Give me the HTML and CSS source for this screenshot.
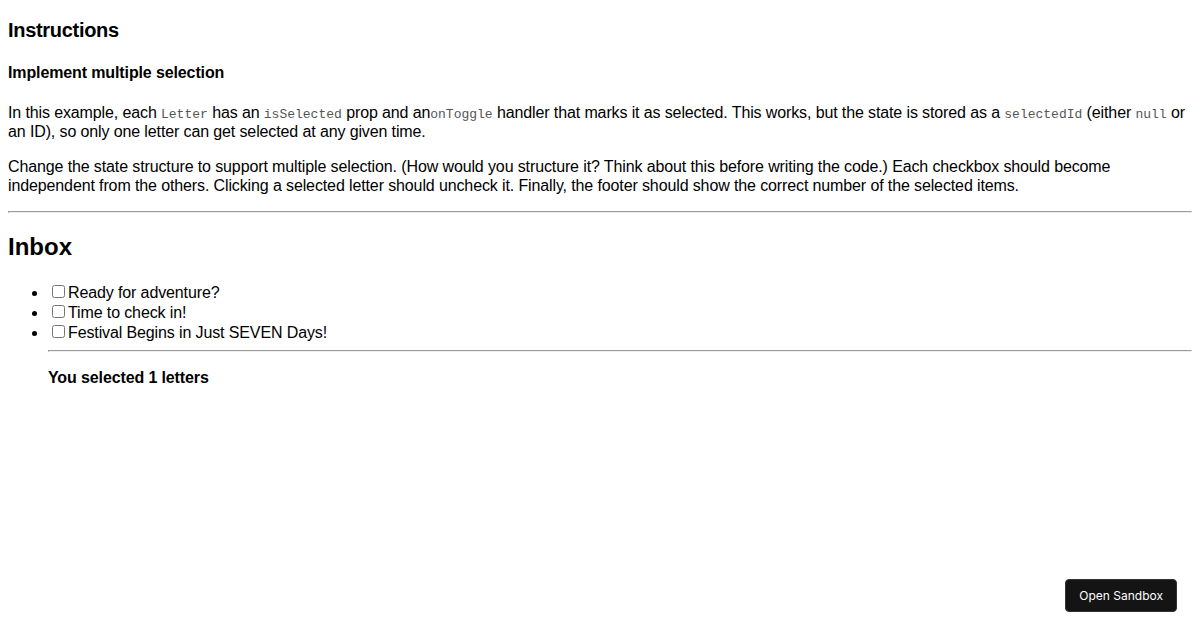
FILE: index.html
```html
<!DOCTYPE html>
<html>
<head>
<meta charset="utf-8">
<title>Inbox</title>
<link rel="stylesheet" href="styles.css">
</head>
<body>
<div class="instructions">
  <h2>Instructions</h2>
  <h3>Implement multiple selection</h3>
  <p>In this example, each <code>Letter</code> has an <code>isSelected</code> prop and an<code>onToggle</code> handler that marks it as selected. This works, but the state is stored as a <code>selectedId</code> (either <code>null</code> or an ID), so only one letter can get selected at any given time.</p>
  <p>Change the state structure to support multiple selection. (How would you structure it? Think about this before writing the code.) Each checkbox should become independent from the others. Clicking a selected letter should uncheck it. Finally, the footer should show the correct number of the selected items.</p>
</div>
<hr>
<h2 class="inbox-title">Inbox</h2>
<ul>
  <li><label><input type="checkbox">Ready for adventure?</label></li>
  <li><label><input type="checkbox">Time to check in!</label></li>
  <li><label><input type="checkbox">Festival Begins in Just SEVEN Days!</label></li>
  <hr>
  <p class="count"><b>You selected 1 letters</b></p>
</ul>
<button class="sandbox">Open Sandbox</button>
</body>
</html>
```

FILE: styles.css
```css
body {
    font-family: "Liberation Sans", Arial, sans-serif;
    letter-spacing: -0.12px;
}
.instructions {
    line-height: 19px;
}
.instructions h2 {
    font-size: 20px;
    margin: 10px 0 21px;
    line-height: 24px;
    letter-spacing: -0.3px;
}
.instructions h3 {
    font-size: 16px;
    margin: 0 0 21px;
}
.instructions p {
    margin: 16px 0;
}
code {
    font-family: "Liberation Mono", "Courier New", monospace;
    font-size: 13px;
    line-height: 1;
    letter-spacing: 0;
    color: #555;
}
.inbox-title {
    font-size: 24px;
    letter-spacing: 0;
}
ul {
    margin-top: 21px;
}
.count {
    margin-top: 17px;
}
.sandbox {
    position: fixed;
    right: 23px;
    bottom: 18px;
    background: #141414;
    color: #fff;
    border: 1px solid #333;
    border-radius: 4px;
    padding: 8px 13px;
    font: 12px "Inter", "Liberation Sans", sans-serif;
    letter-spacing: 0;
}
```
